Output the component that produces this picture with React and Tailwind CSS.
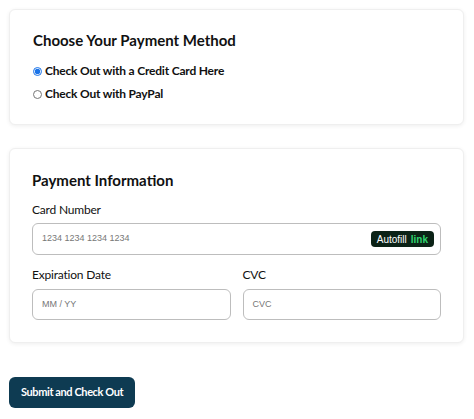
import React, { useState } from 'react';

const App = () => {
  const [method, setMethod] = useState('card');

  return (
    <div className="min-h-screen bg-white px-[9px] pt-[9px] text-[#111] font-['Lato',sans-serif]">
      <div className="w-[455px] rounded-md border border-[#efefef] bg-white px-[23px] pt-[20px] pb-[22px] shadow-[0_1px_4px_rgba(0,0,0,0.07)]">
        <h2 className="text-[15px] leading-[21px] font-bold">Choose Your Payment Method</h2>
        <div className="mt-[12px] flex flex-col gap-[7px]">
          <label className="flex items-center gap-[3px] text-[12px] leading-[16px] font-bold tracking-[-0.2px]">
            <input
              type="radio"
              name="method"
              checked={method === 'card'}
              onChange={() => setMethod('card')}
              className="m-0 h-[9px] w-[9px] accent-[#1a73e8]"
            />
            <span>Check Out with a Credit Card Here</span>
          </label>
          <label className="flex items-center gap-[3px] text-[12px] leading-[16px] font-bold tracking-[-0.2px]">
            <input
              type="radio"
              name="method"
              checked={method === 'paypal'}
              onChange={() => setMethod('paypal')}
              className="m-0 h-[9px] w-[9px] accent-[#1a73e8]"
            />
            <span>Check Out with PayPal</span>
          </label>
        </div>
      </div>

      <div className="mt-[23px] w-[455px] rounded-md border border-[#efefef] bg-white px-[22px] pt-[21px] pb-[22px] shadow-[0_1px_4px_rgba(0,0,0,0.07)]">
        <h2 className="text-[15px] leading-[21px] font-bold">Payment Information</h2>

        <div className="mt-[10px] text-[12px] leading-[17px] tracking-[-0.2px]">Card Number</div>
        <div className="mt-[5px] flex h-[32px] items-center justify-between rounded-md border border-[#bdbdbd] pl-[9px] pr-[6px]">
          <span className="font-['Liberation_Sans',sans-serif] text-[9px] text-[#777]">1234 1234 1234 1234</span>
          <span className="flex h-[16px] items-center gap-[4px] rounded-[4px] bg-[#0b2216] px-[6px] font-['Liberation_Sans',sans-serif] text-[10px]">
            <span className="text-white">Autofill</span>
            <span className="font-bold text-[#2fd36e]">link</span>
          </span>
        </div>

        <div className="mt-[11px] grid grid-cols-2 gap-x-[12px]">
          <div>
            <div className="text-[12px] leading-[17px] tracking-[-0.2px]">Expiration Date</div>
            <div className="mt-[6px] flex h-[31px] items-center rounded-md border border-[#bdbdbd] px-[9px]">
              <span className="font-['Liberation_Sans',sans-serif] text-[9px] text-[#777]">MM / YY</span>
            </div>
          </div>
          <div>
            <div className="text-[12px] leading-[17px] tracking-[-0.2px]">CVC</div>
            <div className="mt-[6px] flex h-[31px] items-center rounded-md border border-[#bdbdbd] px-[9px]">
              <span className="font-['Liberation_Sans',sans-serif] text-[9px] text-[#777]">CVC</span>
            </div>
          </div>
        </div>
      </div>

      <button className="mt-[34px] h-[31px] rounded-md bg-[#0e3b52] px-[12px] text-[11px] font-bold tracking-[-0.4px] text-white">
        Submit and Check Out
      </button>
    </div>
  );
};

export default App;
